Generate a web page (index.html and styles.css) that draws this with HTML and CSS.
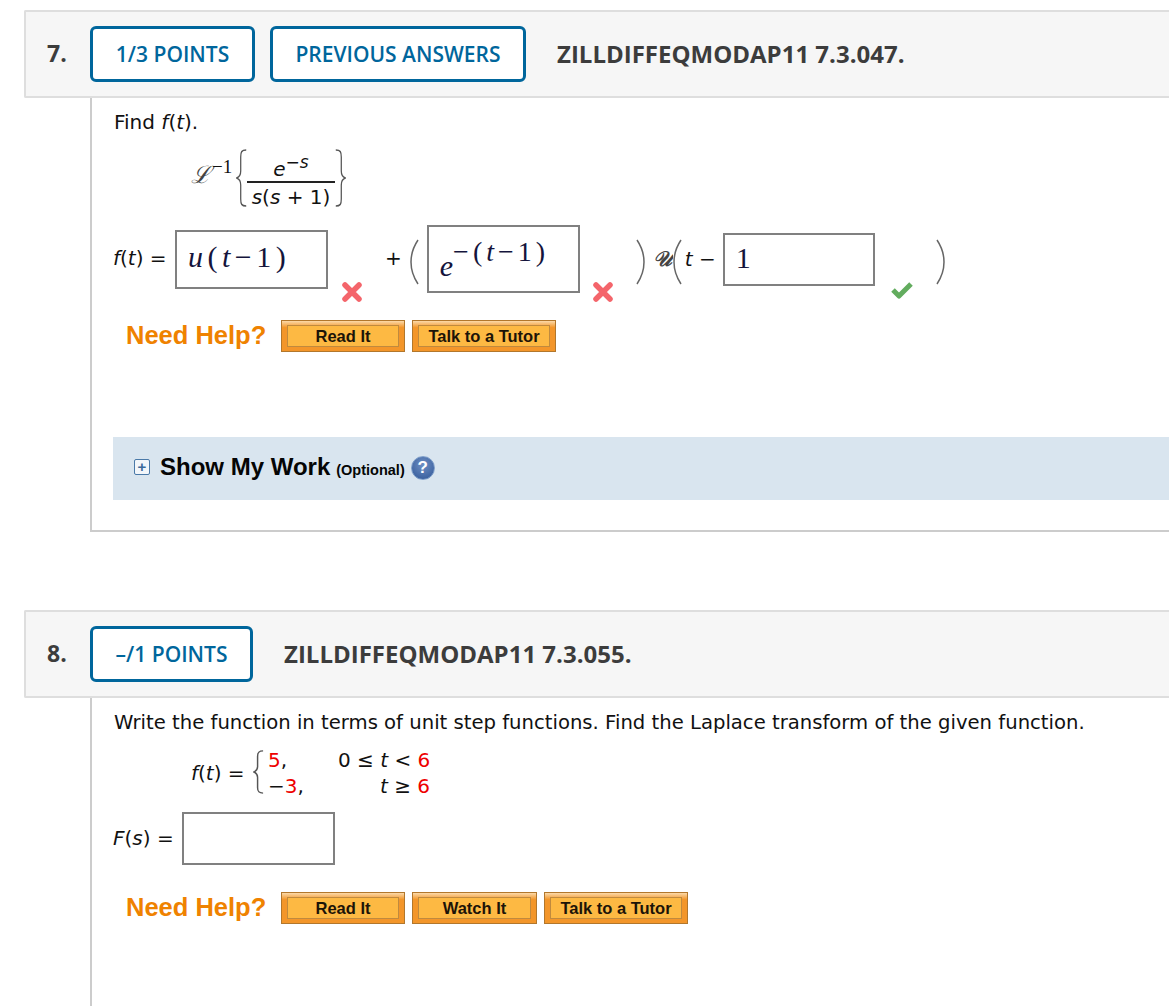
FILE: index.html
```html
<!DOCTYPE html>
<html lang="en">

<head>
    <meta charset="UTF-8" />
    <title>Assignment</title>
    <link rel="stylesheet" href="styles.css">
</head>

<body>
    <!-- Question 7 -->
    <div class="q-head">
        <span class="q-num">7.</span>
        <span class="pill pill-points">1/3 POINTS</span>
        <span class="pill pill-prev">PREVIOUS ANSWERS</span>
        <span class="q-title">ZILLDIFFEQMODAP11 7.3.047.</span>
    </div>
    <div class="q-body q-body-first">
        <p class="prompt">Find <i>f</i>(<i>t</i>).</p>

        <div class="laplace">
            <span class="script-l">ℒ</span><span class="inv">−1</span>
            <svg class="brace" width="11" height="58" viewBox="0 0 14 58" preserveAspectRatio="none">
                <path d="M13 1 C7 1 6 3 6 8 V22 C6 26 4 28 1 29 C4 30 6 32 6 36 V50 C6 55 7 57 13 57" fill="none" stroke="#555" stroke-width="1.6" />
            </svg>
            <span class="frac">
                <span class="frac-top"><i>e</i><sup>−<i>s</i></sup></span>
                <span class="frac-bot"><i>s</i>(<i>s</i> + 1)</span>
            </span>
            <svg class="brace" width="11" height="58" viewBox="0 0 14 58" preserveAspectRatio="none">
                <path d="M1 1 C7 1 8 3 8 8 V22 C8 26 10 28 13 29 C10 30 8 32 8 36 V50 C8 55 7 57 1 57" fill="none" stroke="#555" stroke-width="1.6" />
            </svg>
        </div>

        <div class="answer-row">
            <span class="lhs"><i>f</i>(<i>t</i>) =</span>
            <span class="box box-a"><span class="tex"><i>u</i> ( <i>t</i> − 1 )</span></span>
            <svg class="mark mark-a" width="22" height="22" viewBox="0 0 22 22">
                <path d="M4 4 L18 18 M18 4 L4 18" stroke="#f4656b" stroke-width="5.5" stroke-linecap="round" />
            </svg>
            <span class="plus">+</span>
            <svg class="paren paren-open" width="9" height="46" viewBox="0 0 9 46">
                <path d="M8 1 C2 10 1 17 1 23 C1 29 2 36 8 45" fill="none" stroke="#666" stroke-width="1.5" />
            </svg>
            <span class="box box-b"><span class="tex tex-e"><i>e</i><span class="tex-sup">− ( <i>t</i> − 1 )</span></span></span>
            <svg class="mark mark-b" width="22" height="22" viewBox="0 0 22 22">
                <path d="M4 4 L18 18 M18 4 L4 18" stroke="#f4656b" stroke-width="5.5" stroke-linecap="round" />
            </svg>
            <svg class="paren paren-close" width="9" height="46" viewBox="0 0 9 46">
                <path d="M1 1 C7 10 8 17 8 23 C8 29 7 36 1 45" fill="none" stroke="#666" stroke-width="1.5" />
            </svg>
            <span class="script-u">𝒰</span>
            <svg class="paren paren-step" width="9" height="46" viewBox="0 0 9 46">
                <path d="M8 1 C2 10 1 17 1 23 C1 29 2 36 8 45" fill="none" stroke="#666" stroke-width="1.5" />
            </svg>
            <span class="step-t"><i>t</i> −</span>
            <span class="box box-c"><span class="tex tex-one">1</span></span>
            <svg class="mark mark-c" width="24" height="20" viewBox="0 0 24 20">
                <path d="M3 10 L9 16 L21 4" fill="none" stroke="#62ac5e" stroke-width="5" stroke-linejoin="round" />
            </svg>
            <svg class="paren paren-end" width="9" height="46" viewBox="0 0 9 46">
                <path d="M1 1 C7 10 8 17 8 23 C8 29 7 36 1 45" fill="none" stroke="#666" stroke-width="1.5" />
            </svg>
        </div>

        <div class="help-row help-row-first">
            <span class="need-help">Need Help?</span>
            <span class="help-btn btn-read"><span>Read It</span></span>
            <span class="help-btn btn-tutor"><span>Talk to a Tutor</span></span>
        </div>

        <div class="work-bar">
            <span class="plus-box">+</span>
            <span class="work-title">Show My Work</span>
            <span class="work-opt">(Optional)</span>
            <span class="work-help">?</span>
        </div>
    </div>

    <!-- Question 8 -->
    <div class="q-head q-head-second">
        <span class="q-num">8.</span>
        <span class="pill pill-minus">–/1 POINTS</span>
        <span class="q-title">ZILLDIFFEQMODAP11 7.3.055.</span>
    </div>
    <div class="q-body q-body-second">
        <p class="prompt prompt-long">Write the function in terms of unit step functions. Find the Laplace transform of the given function.</p>

        <div class="piecewise">
            <span class="pw-lhs"><i>f</i>(<i>t</i>) =</span>
            <svg class="pw-brace" width="11" height="44" viewBox="0 0 12 50" preserveAspectRatio="none">
                <path d="M11 1 C6 1 5 3 5 7 V19 C5 22 3 24 1 25 C3 26 5 28 5 31 V43 C5 47 6 49 11 49" fill="none" stroke="#555" stroke-width="1.6" />
            </svg>
            <div class="pw-grid">
                <span><b class="red">5</b>,</span>
                <span class="pw-cond">0 ≤ <i>t</i> &lt; <b class="red">6</b></span>
                <span>−<b class="red">3</b>,</span>
                <span class="pw-cond"><i>t</i> ≥ <b class="red">6</b></span>
            </div>
        </div>

        <div class="fs-row">
            <span class="lhs"><i>F</i>(<i>s</i>) =</span>
            <span class="box box-d"></span>
        </div>

        <div class="help-row help-row-second">
            <span class="need-help">Need Help?</span>
            <span class="help-btn btn-read"><span>Read It</span></span>
            <span class="help-btn btn-watch"><span>Watch It</span></span>
            <span class="help-btn btn-tutor"><span>Talk to a Tutor</span></span>
        </div>
    </div>
</body>

</html>
```
FILE: styles.css
```css
html,
body {
    height: 1006px;
    overflow: hidden;
}

body {
    margin: 0;
    padding-top: 10px;
    box-sizing: border-box;
    background: white;
    font-family: 'DejaVu Sans', Verdana, sans-serif;
    font-size: 20px;
    color: #111;
}

/* cabecalho da questao */
.q-head {
    margin-left: 24px;
    height: 88px;
    box-sizing: border-box;
    background: #f6f6f6;
    border: 2px solid #dedede;
    border-right: 0;
    border-radius: 2px 0 0 2px;
    padding: 14px 0 0 21px;
    display: flex;
    align-items: flex-start;
    font-family: 'Open Sans', sans-serif;
}

.q-head-second {
    margin-top: 78px;
}

.q-num {
    width: 43px;
    font-size: 23px;
    font-weight: 700;
    line-height: 54px;
    color: #3c3c3c;
}

.pill {
    height: 56px;
    box-sizing: border-box;
    border: 3px solid #00669c;
    border-radius: 6px;
    background: white;
    color: #00669c;
    font-size: 21px;
    font-weight: 600;
    line-height: 50px;
    text-align: center;
}

.pill-points {
    width: 165px;
}

.pill-prev {
    width: 256px;
    margin-left: 15px;
}

.pill-minus {
    width: 163px;
}

.q-title {
    margin-left: 31px;
    font-size: 24px;
    font-weight: 700;
    line-height: 56px;
    color: #3c3c3c;
}

/* corpo da questao */
.q-body {
    margin-left: 90px;
    box-sizing: border-box;
    border-left: 2px solid #ccc;
    padding-left: 21px;
}

.q-body-first {
    height: 434px;
    border-bottom: 2px solid #ccc;
}

.q-body-second {
    height: 320px;
}

.prompt {
    margin: 0;
    padding: 11px 0 0 1px;
    line-height: 26px;
}

.prompt-long {
    font-size: 19.64px;
    line-height: 28px;
    margin-bottom: -2px;
}

.laplace {
    display: flex;
    align-items: flex-start;
    margin: 14px 0 0 78px;
    height: 58px;
}

.script-l {
    width: 21px;
    font-family: 'Liberation Serif', serif;
    font-style: italic;
    font-size: 24px;
    line-height: 50px;
    color: #444;
    margin-top: 1px;
}

.inv {
    width: 24px;
    font-family: 'Liberation Serif', serif;
    font-size: 19px;
    line-height: 36px;
}

.frac {
    display: flex;
    flex-direction: column;
    align-items: center;
    width: 88px;
    font-size: 20px;
}

.frac-top {
    height: 34px;
    width: 100%;
    text-align: center;
    border-bottom: 2px solid #222;
    box-sizing: border-box;
    line-height: 40px;
}

.frac-top sup {
    font-size: 17px;
    line-height: 0;
}

.frac-bot {
    line-height: 28px;
}

.answer-row {
    display: flex;
    align-items: flex-start;
    margin-top: 18px;
    height: 80px;
}

.lhs {
    width: 62px;
    line-height: 57px;
    margin-top: 5px;
    white-space: nowrap;
}

.box {
    display: block;
    flex: none;
    box-sizing: border-box;
    width: 153px;
    border: 2px solid #808080;
    background: white;
}

.box-a {
    height: 59px;
    margin-top: 5px;
}

.box-b {
    height: 68px;
    margin-left: 8px;
}

.box-c {
    width: 152px;
    height: 53px;
    margin-left: 7px;
    margin-top: 8px;
}

.box-d {
    height: 53px;
    margin-left: 8px;
}

.tex {
    display: block;
    font-family: 'Liberation Serif', serif;
    font-size: 30px;
    line-height: 50px;
    color: #14143c;
    padding-left: 11px;
    word-spacing: -3px;
}

.tex-one {
    line-height: 46px;
}

.tex-e {
    padding-top: 14px;
}

.tex-sup {
    position: relative;
    top: -15px;
    font-size: 28px;
    word-spacing: -3px;
}

.mark {
    flex: none;
}

.mark-a {
    margin: 56px 0 0 13px;
}

.plus {
    margin: 19px 0 0 22px;
    line-height: 28px;
}

.paren {
    flex: none;
}

.paren-open {
    margin: 14px 0 0 8px;
}

.mark-b {
    margin: 56px 0 0 12px;
}

.paren-close {
    margin: 14px 0 0 22px;
}

.script-u {
    width: 20px;
    overflow: hidden;
    font-family: 'DejaVu Serif', serif;
    font-weight: 700;
    font-style: italic;
    font-size: 21px;
    line-height: 28px;
    margin: 20px 0 0 8px;
    color: #444;
}

.paren-step {
    margin-top: 14px;
}

.step-t {
    line-height: 28px;
    margin: 20px 0 0 3px;
}

.mark-c {
    margin: 55px 0 0 15px;
}

.paren-end {
    margin: 14px 0 0 22px;
}

/* botoes de ajuda */
.help-row {
    display: flex;
    align-items: flex-start;
    padding-left: 13px;
    gap: 7px;
    height: 32px;
}

.help-row-first {
    margin-top: 15px;
}

.help-row-second {
    margin-top: 27px;
}

.need-help {
    width: 141px;
    margin-right: 7px;
    font-family: 'Liberation Sans', Arial, sans-serif;
    font-weight: 700;
    font-size: 25.5px;
    line-height: 30px;
    white-space: nowrap;
    color: #ef8200;
}

.help-btn {
    display: block;
    height: 32px;
    box-sizing: border-box;
    border: 1px solid #b2772c;
    padding: 4px 5px;
    background: linear-gradient(#fbd9a8, #f3962a 22%, #f3962a);
}

.help-btn span {
    display: block;
    height: 22px;
    border: 1px solid #c08a3e;
    background: #fdb943;
    box-sizing: border-box;
    font-family: 'Liberation Sans', Arial, sans-serif;
    font-weight: 700;
    font-size: 16.5px;
    line-height: 21px;
    text-align: center;
    white-space: nowrap;
    color: #1c1408;
}

.btn-read {
    width: 124px;
}

.btn-watch {
    width: 125px;
}

.btn-tutor {
    width: 144px;
}

/* mostrar trabalho */
.work-bar {
    margin-top: 85px;
    height: 63px;
    box-sizing: border-box;
    padding: 0 0 4px 21px;
    background: #d9e5ef;
    display: flex;
    align-items: center;
    font-family: 'Liberation Sans', Arial, sans-serif;
    color: #050505;
}

.plus-box {
    width: 16px;
    height: 16px;
    box-sizing: border-box;
    border: 1px solid #4a79a8;
    border-radius: 2px;
    background: #f2f6fa;
    color: #3b6a9c;
    font-size: 15px;
    font-weight: 700;
    line-height: 13px;
    text-align: center;
}

.work-title {
    margin-left: 10px;
    font-size: 24px;
    font-weight: 700;
}

.work-opt {
    margin: 6px 0 0 6px;
    font-size: 14.5px;
    font-weight: 700;
}

.work-help {
    width: 24px;
    height: 24px;
    margin: 2px 0 0 6px;
    border-radius: 50%;
    box-sizing: border-box;
    border: 1px solid #7f9fca;
    background: radial-gradient(circle at 50% 35%, #6f90c4, #2e5596);
    color: white;
    font-size: 17px;
    font-weight: 700;
    line-height: 22px;
    text-align: center;
}

/* funcao por partes */
.piecewise {
    display: flex;
    align-items: flex-start;
    margin: 12px 0 0 78px;
    height: 52px;
}

.pw-lhs {
    width: 62px;
    line-height: 52px;
    white-space: nowrap;
}

.pw-brace {
    flex: none;
    margin-top: 3px;
}

.pw-grid {
    display: grid;
    grid-template-columns: 70px 92px;
    margin-left: 4px;
    grid-auto-rows: 26px;
    line-height: 26px;
    white-space: nowrap;
}

.pw-cond {
    text-align: right;
}

.red {
    color: #ee0000;
    font-weight: 400;
}

.fs-row {
    display: flex;
    align-items: flex-start;
    margin-top: 13px;
}

.fs-row .lhs {
    width: auto;
    margin-top: 0;
    line-height: 53px;
}
```
